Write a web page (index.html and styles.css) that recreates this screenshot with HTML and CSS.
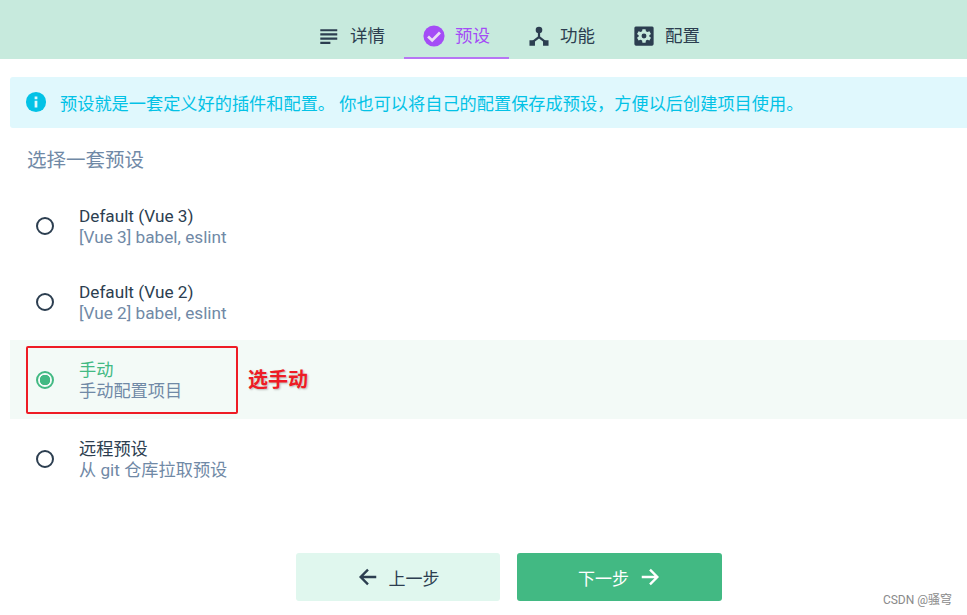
FILE: index.html
```html
<!DOCTYPE html>
<html lang="zh">
<head>
<meta charset="utf-8">
<title>预设</title>
<link rel="stylesheet" href="styles.css">
</head>
<body>
<div class="page">
  <nav class="tabs">
    <a class="tab">
      <svg class="icon" viewBox="0 0 24 24"><path d="M2.500 4.500h18.500v2.400H2.500zM2.500 9.100h18.500v2.400H2.500zM2.500 13.700h18.500v2.400H2.500zM2.500 18.300h11v2.400h-11z" fill="#2c3e50"/></svg>
      <span>详情</span>
    </a>
    <a class="tab active">
      <svg class="icon" viewBox="0 0 24 24"><circle cx="12" cy="12" r="11.500" fill="#a44cf6"/><path d="M5.500 12.500l4.500 4.300 8.500-8.600" fill="none" stroke="#eadcf6" stroke-width="3"/></svg>
      <span>预设</span>
    </a>
    <a class="tab">
      <svg class="icon" viewBox="0 0 24 24"><circle cx="12" cy="5.500" r="3.600" fill="#2c3e50"/><path d="M10.800 7h2.400v5.600l6 4.600-1.400 1.800-5.800-4.400-5.800 4.400-1.400-1.800 6-4.600z" fill="#2c3e50"/><path d="M1.600 16.500h6v6h-6zM16.400 16.500h6v6h-6z" fill="#2c3e50"/></svg>
      <span>功能</span>
    </a>
    <a class="tab">
      <svg class="icon" viewBox="0 0 24 24"><path fill-rule="evenodd" fill="#2c3e50" d="M3 1.500h18A1.800 1.800 0 0 1 22.500 3.300v17.400A1.800 1.800 0 0 1 21 22.500H3a1.800 1.800 0 0 1-1.500-1.800V3.300A1.800 1.800 0 0 1 3 1.500zM10.300 4.500l-.4 2.300-1.600.9-2.200-.8-1.700 2.900 1.800 1.500v1.200l-1.800 1.500 1.700 2.900 2.200-.8 1.600.9.400 2.300h3.400l.4-2.300 1.600-.9 2.200.8 1.700-2.900-1.800-1.500v-1.200l1.800-1.500-1.700-2.900-2.200.8-1.600-.9-.4-2.300zM12 9.300a2.700 2.700 0 1 1 0 5.400 2.700 2.700 0 0 1 0-5.400z"/></svg>
      <span>配置</span>
    </a>
  </nav>

  <div class="notice">
    <svg class="notice-icon" viewBox="0 0 24 24"><circle cx="12" cy="12" r="11" fill="#03c2e6"/><path d="M10.500 10.500h3V18h-3zM10.500 6h3v3h-3z" fill="#e0f8fd"/></svg>
    <span>预设就是一套定义好的插件和配置。 你也可以将自己的配置保存成预设，方便以后创建项目使用。</span>
  </div>

  <h2 class="heading">选择一套预设</h2>

  <ul class="options">
    <li class="option">
      <span class="radio"></span>
      <div class="labels"><div class="name">Default (Vue 3)</div><div class="desc">[Vue 3] babel, eslint</div></div>
    </li>
    <li class="option">
      <span class="radio"></span>
      <div class="labels"><div class="name">Default (Vue 2)</div><div class="desc">[Vue 2] babel, eslint</div></div>
    </li>
    <li class="option selected">
      <span class="radio"></span>
      <div class="labels"><div class="name">手动</div><div class="desc">手动配置项目</div></div>
      <div class="redbox"></div>
      <div class="annotation">选手动</div>
    </li>
    <li class="option">
      <span class="radio"></span>
      <div class="labels"><div class="name">远程预设</div><div class="desc">从 git 仓库拉取预设</div></div>
    </li>
  </ul>

  <div class="actions">
    <button class="btn prev">
      <svg class="arrow" viewBox="0 0 24 24"><path d="M21 12H4M12 4l-8 8 8 8" fill="none" stroke="#2c3e50" stroke-width="2.600"/></svg>
      <span>上一步</span>
    </button>
    <button class="btn next">
      <span>下一步</span>
      <svg class="arrow" viewBox="0 0 24 24"><path d="M3 12h17M12 4l8 8-8 8" fill="none" stroke="#fff" stroke-width="2.600"/></svg>
    </button>
  </div>

  <div class="watermark">CSDN @骚穹</div>
</div>
</body>
</html>
```
FILE: styles.css
```css
* { box-sizing: border-box; }
html, body { margin: 0; padding: 0; background: #fff; }
body {
  font-family: Roboto, "Noto Sans CJK SC", sans-serif;
  color: #2c3e50;
}
.page {
  position: relative;
  width: 967px;
  height: 615px;
  overflow: hidden;
}
.tabs {
  height: 59px;
  background: #c7eadd;
  display: flex;
  justify-content: center;
  align-items: flex-end;
  padding-left: 51px;
}
.tab {
  width: 105px;
  height: 59px;
  padding-top: 21px;
  display: flex;
  justify-content: center;
  align-items: flex-start;
  gap: 10px;
  font-size: 17.500px;
  line-height: 30px;
  color: #2c3e50;
  border-bottom: 2px solid transparent;
}
.tab .icon { width: 22px; height: 22px; margin-top: 4px; flex: none; }
.tab.active { color: #a44cf6; border-bottom-color: #b775f4; }
.notice {
  margin: 18px 0 0 10px;
  height: 51px;
  background: #e0f8fd;
  border-radius: 3px 0 0 3px;
  color: #03c2e6;
  display: flex;
  align-items: center;
  padding-left: 15px;
  gap: 13px;
  font-size: 17.200px;
  white-space: nowrap;
}
.notice-icon { width: 22px; height: 22px; flex: none; margin-top: -2px; }
.heading {
  margin: 20px 0 0 27px;
  font-weight: 400;
  font-size: 19.500px;
  line-height: 26px;
  color: #7089a6;
}
.options {
  list-style: none;
  margin: 14px 0 0 10px;
  padding: 0;
  display: grid;
  grid-template-rows: 76px 76px 79px 79px;
}
.option {
  position: relative;
  display: flex;
  align-items: center;
  padding-left: 26px;
  gap: 25px;
}
.radio {
  width: 18px;
  height: 18px;
  border-radius: 50%;
  border: 2px solid #2c3e50;
  flex: none;
}
.labels { line-height: 21px; font-size: 17.200px; margin-top: 2px; }
.desc { color: #7089a6; }
.selected { background: #f3faf7; }
.selected .name { color: #42b983; }
.selected .radio {
  border-color: #42b983;
  background: radial-gradient(circle, #42b983 0 5px, transparent 5.500px);
}
.redbox {
  position: absolute;
  left: 16px;
  top: 6px;
  width: 212px;
  height: 68px;
  border: 2px solid #ee1c25;
  border-radius: 2px;
}
.annotation {
  position: absolute;
  left: 238px;
  top: 28px;
  font-size: 20px;
  line-height: 24px;
  font-weight: 700;
  color: #ee1c25;
  text-shadow: 1px 1px 2px rgba(0, 0, 0, 0.25);
}
.actions {
  position: absolute;
  left: 296px;
  top: 553px;
  display: flex;
  gap: 17px;
}
.btn {
  width: 204px;
  height: 48px;
  border: 0;
  border-radius: 3px;
  font: inherit;
  font-size: 17px;
  display: flex;
  align-items: center;
  justify-content: center;
  gap: 10px;
}
.btn.prev { background: #e0f7ee; color: #2c3e50; }
.btn.next { width: 205px; background: #42b983; color: #fff; }
.arrow { width: 22px; height: 22px; flex: none; }
.watermark {
  position: absolute;
  right: 15px;
  top: 592px;
  font-size: 12px;
  line-height: 16px;
  color: #8a8a8a;
}
```
